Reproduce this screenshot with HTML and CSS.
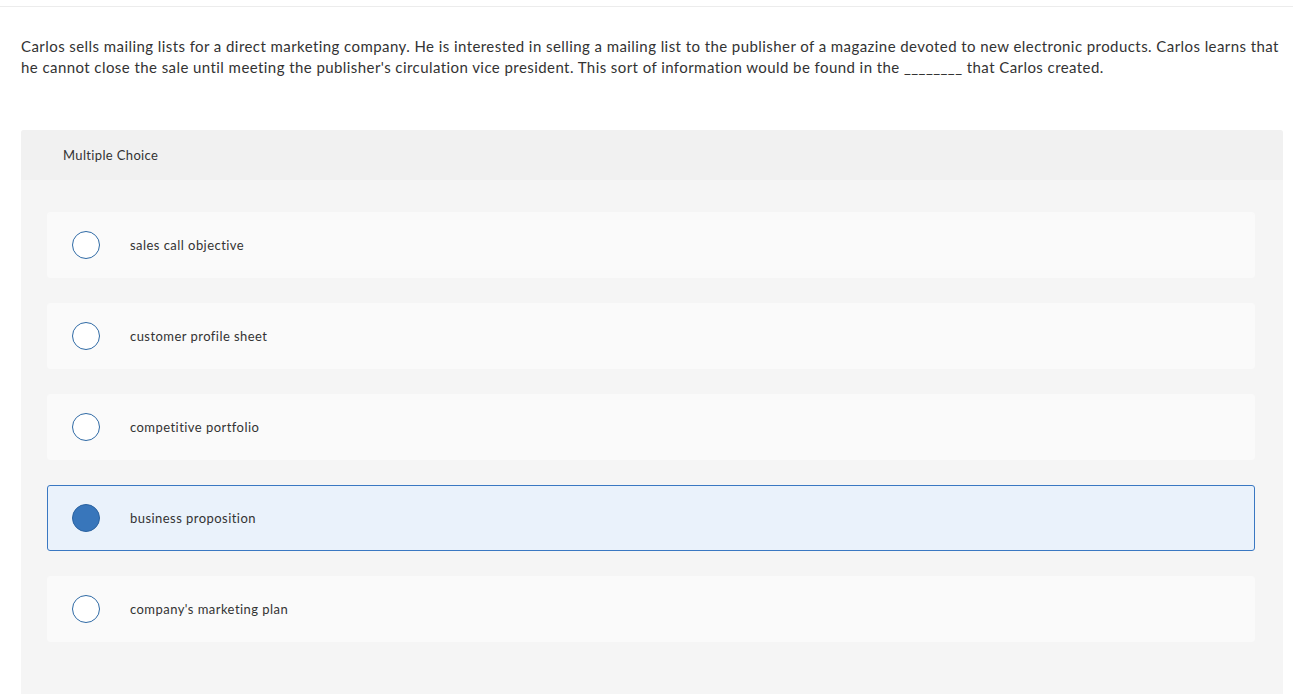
FILE: index.html
```html
<!DOCTYPE html>
<html lang="en">

<head>
  <meta charset="UTF-8" />
  <title>Multiple Choice</title>
  <link rel="stylesheet" href="styles.css">
</head>

<body>
  <div class="topbar"></div>

  <div class="page">
    <p class="question">Carlos sells mailing lists for a direct marketing company. He is interested in selling a mailing list to the publisher of a magazine devoted to new electronic products. Carlos learns that he cannot close the sale until meeting the publisher's circulation vice president. This sort of information would be found in the ________ that Carlos created.</p>

    <div class="card">
      <div class="card-header">Multiple Choice</div>
      <div class="card-body">
        <label class="option">
          <span class="radio"></span>
          <span class="label">sales call objective</span>
        </label>
        <label class="option">
          <span class="radio"></span>
          <span class="label">customer profile sheet</span>
        </label>
        <label class="option">
          <span class="radio"></span>
          <span class="label">competitive portfolio</span>
        </label>
        <label class="option selected">
          <span class="radio"></span>
          <span class="label">business proposition</span>
        </label>
        <label class="option">
          <span class="radio"></span>
          <span class="label">company's marketing plan</span>
        </label>
      </div>
    </div>
  </div>
</body>

</html>
```

FILE: styles.css
```css
* {
  margin: 0;
  padding: 0;
  box-sizing: border-box;
}

html,
body {
  height: 100%;
  background: #fff;
  font-family: "Lato", "Liberation Sans", sans-serif;
  color: #333;
}

.topbar {
  height: 7px;
  border-bottom: 1px solid #ececec;
}

.page {
  padding: 29px 10px 0 21px;
}

.question {
  font-size: 15px;
  line-height: 21px;
  letter-spacing: 0.43px;
}

.card {
  margin-top: 52px;
  border-radius: 3px 3px 0 0;
  background: #f5f5f5;
  overflow: hidden;
}

.card-header {
  height: 50px;
  display: flex;
  align-items: center;
  padding-left: 42px;
  background: #f1f1f1;
  font-size: 13px;
  letter-spacing: 0.35px;
}

.card-body {
  display: flex;
  flex-direction: column;
  gap: 25px;
  padding: 32px 28px 60px 26px;
}

.option {
  display: flex;
  align-items: center;
  height: 66px;
  padding-left: 24px;
  background: #fafafa;
  border: 1px solid #fafafa;
  border-radius: 3px;
  cursor: pointer;
}

.radio {
  width: 28px;
  height: 28px;
  border-radius: 50%;
  border: 1px solid #2f6aa5;
  background: #fff;
  flex-shrink: 0;
}

.label {
  margin-left: 30px;
  font-size: 13px;
  letter-spacing: 0.45px;
}

.option.selected {
  background: #eaf2fb;
  border-color: #3a78c2;
}

.option.selected .radio {
  background: #3876bb;
  border-color: #2a62a0;
}
```
